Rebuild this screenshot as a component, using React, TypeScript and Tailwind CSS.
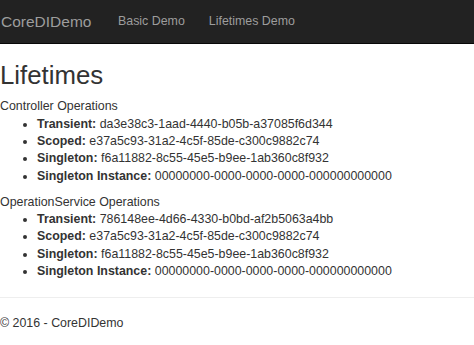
const groups = [
  {
    title: "Controller Operations",
    items: [
      ["Transient", "da3e38c3-1aad-4440-b05b-a37085f6d344"],
      ["Scoped", "e37a5c93-31a2-4c5f-85de-c300c9882c74"],
      ["Singleton", "f6a11882-8c55-45e5-b9ee-1ab360c8f932"],
      ["Singleton Instance", "00000000-0000-0000-0000-000000000000"],
    ],
  },
  {
    title: "OperationService Operations",
    items: [
      ["Transient", "786148ee-4d66-4330-b0bd-af2b5063a4bb"],
      ["Scoped", "e37a5c93-31a2-4c5f-85de-c300c9882c74"],
      ["Singleton", "f6a11882-8c55-45e5-b9ee-1ab360c8f932"],
      ["Singleton Instance", "00000000-0000-0000-0000-000000000000"],
    ],
  },
];

export default function App() {
  return (
    <div className="min-h-[345px] bg-white text-[12.4px] leading-[17.3px] text-[#333] font-['Liberation_Sans',Arial,sans-serif]">
      <nav className="flex h-[44px] items-center border-b border-[#080808] bg-[#222]">
        <a className="w-[105px] pl-[1px] text-[15.5px] text-[#9d9d9d]">CoreDIDemo</a>
        <a className="pl-[13px] pr-[12px] text-[#9d9d9d]">Basic Demo</a>
        <a className="px-[12px] text-[#9d9d9d]">Lifetimes Demo</a>
      </nav>

      <main className="pt-[17px]">
        <h2 className="mb-[9px] text-[25.8px] leading-[28.4px] font-normal">Lifetimes</h2>

        {groups.map((g) => (
          <ul key={g.title} className="mb-[9px] list-none">
            <li>
              {g.title}
              <ul className="list-disc pl-[37px]">
                {g.items.map(([k, v]) => (
                  <li key={k}>
                    <strong className="font-bold">{k}:</strong> {v}
                  </li>
                ))}
              </ul>
            </li>
          </ul>
        ))}

        <hr className="mt-[17px] border-t border-[#eee]" />
        <footer className="py-[17px]">
          <p>© 2016 - CoreDIDemo</p>
        </footer>
      </main>
    </div>
  );
}
